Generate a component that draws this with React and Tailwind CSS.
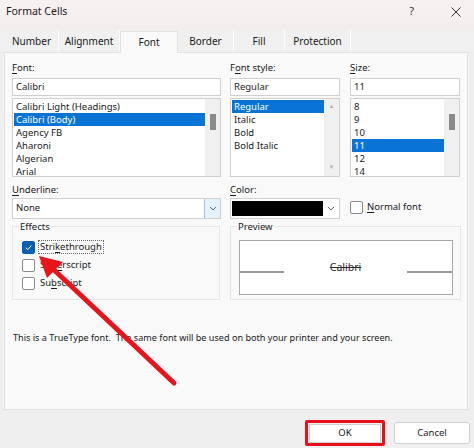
import React from "react";

const F = { fontFamily: '"Noto Sans", "Open Sans", sans-serif' };

function Tab({ label, w, active }) {
  return (
    <div
      className={
        "flex items-center justify-center h-[22px] text-[10px] text-[#1a1a1a] " +
        (active
          ? "bg-[#f9f9f9] border-t border-l border-r border-[#e3e3e3] relative top-[1px] z-10"
          : "bg-[#f0f0f0] border-r border-[#fbfbfb]")
      }
      style={{ width: w }}
    >
      {label}
    </div>
  );
}

function Label({ u, pre = "", rest }) {
  return (
    <div className="text-[9.5px] leading-[14px] text-[#1a1a1a]">
      {pre}
      <span className="underline underline-offset-[2px]">{u}</span>
      {rest}
    </div>
  );
}

function Input({ value }) {
  return (
    <div className="h-[18px] bg-white border border-[#cfcfcf] flex items-center px-[3px] text-[9.5px] text-[#1a1a1a]">
      {value}
    </div>
  );
}

function List({ items, sel, scroll }) {
  return (
    <div className="h-[79px] bg-white border border-[#cfcfcf] flex">
      <div className="flex-1 pt-[1px] pl-[1px]">
        {items.map((it) => (
          <div
            key={it}
            className={
              "h-[13px] leading-[13px] px-[2px] text-[9.5px] " +
              (it === sel ? "bg-[#0a74d6] text-white" : "text-[#1a1a1a]")
            }
          >
            {it}
          </div>
        ))}
      </div>
      {scroll}
    </div>
  );
}

function ScrollThumb() {
  return (
    <div className="w-[15px] bg-[#f0f0f0] flex justify-center pt-[15px]">
      <div className="w-[6px] h-[16px] bg-[#8a8a8a]" />
    </div>
  );
}

function ScrollArrows() {
  return (
    <div className="w-[15px] bg-[#f0f0f0] flex flex-col items-center justify-between pt-[3px] pb-[4px] text-[6px] text-[#b5b5b5]">
      <span>▲</span>
      <span>▼</span>
    </div>
  );
}

function Check({ label, u, checked, focus }) {
  const idx = label.indexOf(u);
  return (
    <div className="flex items-center h-[18px]">
      <div
        className={
          "w-[13px] h-[13px] rounded-[2px] flex items-center justify-center " +
          (checked ? "bg-[#0a5fb4] border border-[#0a5fb4]" : "bg-white border border-[#8a8a8a]")
        }
      >
        {checked && (
          <svg width="9" height="9" viewBox="0 0 10 10">
            <path d="M2 5.2 L4.2 7.3 L8.2 2.8" fill="none" stroke="white" strokeWidth="1.1" />
          </svg>
        )}
      </div>
      <div
        className={
          "ml-[3px] px-[1px] text-[9.5px] leading-[12px] text-[#1a1a1a] " +
          (focus ? "border border-dotted border-[#666]" : "border border-transparent")
        }
      >
        {label.slice(0, idx)}
        <span className="underline underline-offset-[2px]">{u}</span>
        {label.slice(idx + u.length)}
      </div>
    </div>
  );
}

function Chevron() {
  return (
    <svg width="8" height="5" viewBox="0 0 8 5">
      <path d="M1 1 L4 4 L7 1" fill="none" stroke="#555" strokeWidth="0.9" />
    </svg>
  );
}

export default function App() {
  return (
    <div className="w-[474px] h-[448px] bg-[#efefef] relative overflow-hidden" style={F}>
      {/* Title bar */}
      <div className="h-[30px] bg-gradient-to-b from-[#f9f1f1] to-[#f3eded] flex items-start pt-[3px] pl-[6px] pr-[13px]">
        <div className="text-[10.5px] text-[#1a1a1a] leading-[16px]">Format Cells</div>
        <div className="flex-1" />
        <div className="text-[11px] text-[#333] leading-[16px] mr-[37px]">?</div>
        <svg width="10" height="10" viewBox="0 0 10 10" className="mt-[4px]">
          <path d="M0.5 0.5 L9.5 9.5 M9.5 0.5 L0.5 9.5" stroke="#333" strokeWidth="1" />
        </svg>
      </div>

      {/* Tabs */}
      <div className="flex pl-[5px] h-[22px] bg-[#f0f0f0]">
        <Tab label="Number" w={54} />
        <Tab label="Alignment" w={61} />
        <Tab label="Font" w={58} active />
        <Tab label="Border" w={56} />
        <Tab label="Fill" w={51} />
        <Tab label="Protection" w={66} />
      </div>

      {/* Panel */}
      <div className="mx-[4px] w-[464px] h-[358px] bg-[#f9f9f9] border border-[#e3e3e3] pl-[7px] pt-[8px]">
        {/* Row 1 */}
        <div className="flex">
          <div className="w-[209px]">
            <Label u="F" rest="ont:" />
            <div className="mt-[3px]"><Input value="Calibri" /></div>
            <div className="mt-[2px]">
              <List
                items={["Calibri Light (Headings)", "Calibri (Body)", "Agency FB", "Aharoni", "Algerian", "Arial"]}
                sel="Calibri (Body)"
                scroll={<ScrollThumb />}
              />
            </div>
          </div>
          <div className="w-[110px] ml-[9px]">
            <Label pre="F" u="o" rest="nt style:" />
            <div className="mt-[3px]"><Input value="Regular" /></div>
            <div className="mt-[2px]">
              <List
                items={["Regular", "Italic", "Bold", "Bold Italic"]}
                sel="Regular"
                scroll={<ScrollArrows />}
              />
            </div>
          </div>
          <div className="w-[110px] ml-[10px]">
            <Label u="S" rest="ize:" />
            <div className="mt-[3px]"><Input value="11" /></div>
            <div className="mt-[2px]">
              <List
                items={["8", "9", "10", "11", "12", "14"]}
                sel="11"
                scroll={<ScrollThumb />}
              />
            </div>
          </div>
        </div>

        {/* Row 2 */}
        <div className="flex mt-[6px]">
          <div className="w-[209px]">
            <Label u="U" rest="nderline:" />
            <div className="mt-[1px] h-[21px] bg-white border border-[#cfcfcf] flex items-center">
              <div className="flex-1 px-[3px] text-[9.5px] text-[#1a1a1a]">None</div>
              <div className="w-[16px] h-[19px] bg-[#e5f1fb] border-l border-[#9cc7ea] flex items-center justify-center">
                <Chevron />
              </div>
            </div>
          </div>
          <div className="w-[110px] ml-[9px]">
            <Label u="C" rest="olor:" />
            <div className="mt-[1px] h-[21px] bg-white border border-[#cfcfcf] flex items-center pl-[1px]">
              <div className="w-[91px] h-[15px] bg-black" />
              <div className="flex-1 flex items-center justify-center">
                <Chevron />
              </div>
            </div>
          </div>
          <div className="ml-[10px] pt-[12px] flex items-center h-[36px]">
            <div className="w-[13px] h-[13px] rounded-[2px] bg-white border border-[#8a8a8a]" />
            <div className="ml-[4px] text-[9.5px] text-[#1a1a1a]">
              <span className="underline underline-offset-[2px]">N</span>ormal font
            </div>
          </div>
        </div>

        {/* Row 3: group boxes */}
        <div className="flex mt-[7px]">
          <div className="w-[208px] h-[74px] border border-[#e6e6e6] relative">
            <div className="absolute -top-[6px] left-[6px] px-[1px] bg-[#f9f9f9] text-[9.5px] leading-[12px] text-[#1a1a1a]">
              Effects
            </div>
            <div className="pl-[9px] pt-[11px] flex flex-col">
              <Check label="Strikethrough" u="k" checked focus />
              <Check label="Superscript" u="e" />
              <Check label="Subscript" u="b" />
            </div>
          </div>
          <div className="w-[231px] h-[74px] ml-[10px] border border-[#e6e6e6] relative">
            <div className="absolute -top-[6px] left-[6px] px-[1px] bg-[#f9f9f9] text-[9.5px] leading-[12px] text-[#1a1a1a]">
              Preview
            </div>
            <div className="ml-[8px] mt-[13px] w-[214px] h-[55px] bg-white border border-[#a8a8a8] flex items-center">
              <div className="w-[44px] h-[2px] bg-[#9a9a9a] mt-[9px]" />
              <div className="flex-1 text-center text-[10.5px] text-[#2b2b2b] line-through">Calibri</div>
              <div className="w-[45px] h-[2px] bg-[#9a9a9a] mt-[9px]" />
            </div>
          </div>
        </div>

        {/* Info text */}
        <div className="mt-[31px] pl-[1px] text-[9.1px] leading-[14px] text-[#1a1a1a]">
          This is a TrueType font.&nbsp; The same font will be used on both your printer and your screen.
        </div>
      </div>

      {/* Buttons */}
      <div className="flex justify-end pr-[4px] pt-[10px] gap-[9px]">
        <div className="w-[80px] h-[26px] border-[3px] border-[#e8101a] rounded-[2px] flex items-center justify-center">
          <div className="w-[72px] h-[19px] bg-white border border-[#d0d0d0] flex items-center justify-center text-[9.5px] text-[#1a1a1a]">
            OK
          </div>
        </div>
        <div className="w-[76px] h-[22px] mt-[2px] bg-white border border-[#d0d0d0] rounded-[3px] flex items-center justify-center text-[9.5px] text-[#1a1a1a]">
          Cancel
        </div>
      </div>

      {/* Red annotation arrow */}
      <svg className="absolute left-0 top-0 pointer-events-none" width="474" height="448" viewBox="0 0 474 448">
        <line x1="174" y1="383" x2="52" y2="268" stroke="#e8141b" strokeWidth="5" strokeLinecap="round" />
        <polygon points="39,256 63,262 47,278" fill="#e8141b" />
      </svg>
    </div>
  );
}
